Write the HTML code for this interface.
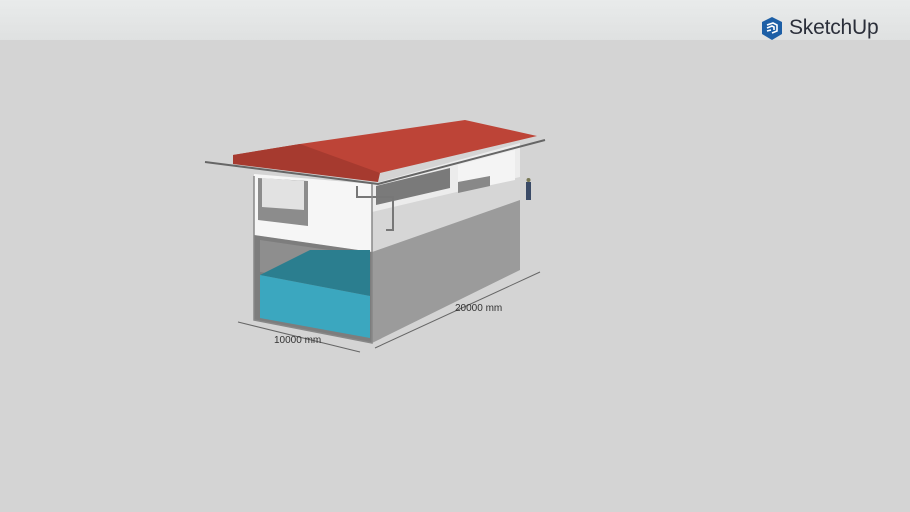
<!DOCTYPE html>
<html><head><style>
html,body{margin:0;padding:0;width:910px;height:512px;overflow:hidden;background:#d4d4d4;font-family:"Liberation Sans",sans-serif}
.top{position:absolute;left:0;top:0;width:910px;height:40px;background:linear-gradient(#e9ebeb,#dfe1e1)}
.logo{position:absolute;left:789px;top:16px;font-size:21px;color:#2b2f3a;letter-spacing:-0.2px}
</style></head><body>
<div class="top"></div>
<svg style="position:absolute;left:760px;top:16px" width="24" height="25" viewBox="0 0 24 25">
<path d="M12 1 L22 6 L22 18 L12 24 L2 18 L2 6 Z" fill="#1d5fa6"/>
<path d="M7 9 L13 7 L17 9 L17 15 L12 17 M7 12 L12 10 L14 11 L14 14 M7 15 L11 14" stroke="#fff" stroke-width="1.6" fill="none"/>
</svg>
<div class="logo">SketchUp</div>
<svg style="position:absolute;left:0;top:0" width="910" height="512">
<!-- side lower -->
<polygon points="372,252 520,197 520,270 372,343" fill="#9b9b9b"/>
<!-- side band -->
<polygon points="372,210 520,175 520,200 372,252" fill="#d6d6d6"/>
<!-- side upper windows -->
<polygon points="372,184 520,143 520,177 372,212" fill="#ececec"/>
<polygon points="376,186 450,168 450,188 376,205" fill="#7a7a7a"/>
<polygon points="458,165 515,150 515,180 458,192" fill="#f4f4f4"/>
<polygon points="458,182 490,176 490,186 458,193" fill="#888"/>
<!-- front white -->
<polygon points="254,174 372,184 372,252 254,235" fill="#f6f6f6"/>
<polygon points="258,178 308,181 308,226 258,220" fill="#8c8c8c"/>
<polygon points="262,178 304,181 304,210 262,207" fill="#e2e2e2"/>
<!-- container interior -->
<polygon points="254,235 372,252 372,343 254,320" fill="#7d7d7d"/>
<polygon points="260,240 370,256 370,290 260,272" fill="#8e8e8e"/>
<polygon points="260,275 310,250 370,250 370,296" fill="#2b7e8f"/>
<polygon points="260,275 370,296 370,338 260,318" fill="#3ba7bf"/>
<!-- pipe -->
<path d="M357,186 L357,197 L393,197 L393,230 L386,230" stroke="#777" stroke-width="2" fill="none"/>
<!-- roof -->
<polygon points="233,155 300,144 465,120 537,136 380,173" fill="#bd4437"/>
<polygon points="233,155 300,144 380,173 378,182 233,164" fill="#a63a2f"/>
<path d="M205,162 L378,184 L545,140" stroke="#666" stroke-width="2" fill="none"/>
<path d="M254,176 L254,320 L372,343 L372,184" stroke="#888" stroke-width="1.5" fill="none"/>
<!-- person -->
<rect x="526" y="182" width="5" height="18" fill="#3a4a66"/>
<circle cx="528.5" cy="180" r="2" fill="#775"/>
<!-- dims -->
<path d="M238,322 L360,352 M375,348 L540,272" stroke="#666" stroke-width="1"/>
<text x="274" y="343" font-size="10" fill="#333">10000 mm</text>
<text x="455" y="311" font-size="10" fill="#333">20000 mm</text>
</svg>
</body></html>
